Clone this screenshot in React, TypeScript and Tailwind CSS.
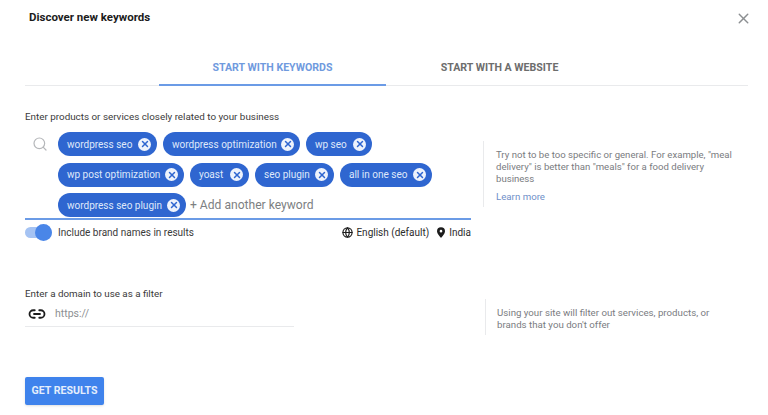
import React from 'react';
import { Search, X, Link2, Globe } from 'lucide-react';

const rows = [
  [
    { label: 'wordpress seo', w: 'w-[99px]' },
    { label: 'wordpress optimization', w: 'w-[137px]' },
    { label: 'wp seo', w: 'w-[66px]' },
  ],
  [
    { label: 'wp post optimization', w: 'w-[126px]' },
    { label: 'yoast', w: 'w-[59px]' },
    { label: 'seo plugin', w: 'w-[79px]' },
    { label: 'all in one seo', w: 'w-[92px]' },
  ],
];

const Chip = ({ label, w }: { label: string; w: string }) => (
  <div className={`flex h-6 ${w} shrink-0 items-center justify-between rounded-full bg-[#2f66d0] pl-[9px] pr-[6px] text-[10px] text-[#dfe8fa]`}>
    <span className="whitespace-nowrap">{label}</span>
    <span className="flex h-[13px] w-[13px] shrink-0 items-center justify-center rounded-full bg-[#eef3fc]">
      <X size={10} strokeWidth={3.5} className="text-[#2f66d0]" />
    </span>
  </div>
);

const App = () => {
  return (
    <div className="flex h-[415px] w-[768px] flex-col overflow-hidden bg-white font-['Roboto',sans-serif]">
      {/* header */}
      <div className="flex h-[36px] items-center justify-between pl-[29px] pr-[16px]">
        <h1 className="text-[11.5px] font-bold text-[#1c1c1c]">Discover new keywords</h1>
        <X size={17} strokeWidth={2} className="text-[#8c8f92]" />
      </div>

      {/* tabs */}
      <div className="mx-[25px] mt-[15px] flex h-[34.5px] w-[723px] border-b border-[#e9eaec]">
        <div className="ml-[134px] flex h-[34.5px] w-[227px] items-start justify-center border-b-2 border-[#6b9be6] pt-[9px] text-[10.6px] font-bold text-[#6f9ade]">
          START WITH KEYWORDS
        </div>
        <div className="flex w-[227px] items-start justify-center pt-[9px] text-[10.6px] font-bold text-[#6d6d6d]">
          START WITH A WEBSITE
        </div>
      </div>

      {/* keywords section */}
      <div className="mt-[24px] flex pl-[25px]">
        <div className="w-[446px]">
          <p className="text-[9.85px] leading-[13px] text-[#3a3a3a]">Enter products or services closely related to your business</p>
          <div className="mt-[9.5px] flex border-b-2 border-[#6b9be6] pb-[1px]">
            <div className="w-[33px] pt-[4px] pl-[7px]">
              <Search size={16} strokeWidth={1.8} className="text-[#b5b7ba]" />
            </div>
            <div className="flex flex-col gap-[6.5px]">
              {rows.map((row, i) => (
                <div key={i} className="flex gap-[6px]">
                  {row.map(c => (
                    <Chip key={c.label} label={c.label} w={c.w} />
                  ))}
                </div>
              ))}
              <div className="flex items-center gap-[4px]">
                <Chip label="wordpress seo plugin" w="w-[128px]" />
                <span className="text-[12.1px] text-[#7d7f82]">+ Add another keyword</span>
              </div>
            </div>
          </div>
          <div className="mt-[4.5px] flex items-center justify-between">
            <div className="flex items-center">
              <div className="relative h-[11px] w-[27px] rounded-full bg-[#a5c3f3]">
                <span className="absolute right-0 top-[-3px] h-[17px] w-[17px] rounded-full bg-[#4a86e8]" />
              </div>
              <span className="ml-[6px] text-[10px] text-[#3a3a3a]">Include brand names in results</span>
            </div>
            <div className="flex items-center text-[10px] text-[#2c2c2c]">
              <Globe size={11} strokeWidth={2.6} className="text-[#1c1c1c]" />
              <span className="ml-[3px]">English (default)</span>
              <svg viewBox="0 0 12 16" className="ml-[8px] h-[11px] w-[8px]">
                <path fillRule="evenodd" fill="#1c1c1c" d="M6 0a6 6 0 0 1 6 6c0 4-6 10-6 10S0 10 0 6a6 6 0 0 1 6-6zm0 4a2 2 0 1 0 0 4 2 2 0 0 0 0-4z" />
              </svg>
              <span className="ml-[4px]">India</span>
            </div>
          </div>
        </div>

        <div className="ml-[12px] mt-[31px] h-[66px] w-[252px] border-l border-[#e9eaec] pl-[12px] pt-[8px]">
          <p className="text-[9.6px] leading-[12px] text-[#7a7c7f]">
            Try not to be too specific or general. For example, "meal delivery" is better than "meals" for a food delivery business
          </p>
          <p className="mt-[6px] text-[9.7px] leading-[12px] text-[#6f8fc9]">Learn more</p>
        </div>
      </div>

      {/* domain filter */}
      <div className="mt-[47px] flex pl-[25px]">
        <div className="w-[269px]">
          <p className="text-[9.8px] leading-[13px] text-[#3a3a3a]">Enter a domain to use as a filter</p>
          <div className="mt-[2px] flex h-[25px] items-center border-b border-[#e9eaec]">
            <Link2 size={18} strokeWidth={2.4} className="ml-[3px] text-[#1c1c1c]" />
            <span className="ml-[9px] text-[10.5px] text-[#8d8f92]">https://</span>
          </div>
        </div>
        <div className="ml-[191px] mt-[12px] h-[36px] w-[240px] border-l border-[#e9eaec] pl-[11px] pt-[8px]">
          <p className="text-[9.7px] leading-[12px] text-[#7a7c7f]">
            Using your site will filter out services, products, or brands that you don't offer
          </p>
        </div>
      </div>

      {/* footer */}
      <div className="mt-[42px] pl-[25px]">
        <button className="flex h-[28px] w-[79px] items-center justify-center rounded-[2px] bg-[#3f83ec] text-[10.6px] font-bold text-[#e4eefc] shadow-sm">
          GET RESULTS
        </button>
      </div>
    </div>
  );
};

export default App;
